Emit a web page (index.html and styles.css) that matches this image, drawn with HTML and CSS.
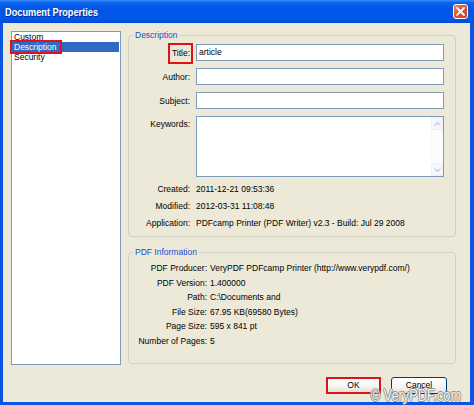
FILE: index.html
```html
<!DOCTYPE html>
<html>
<head>
<meta charset="utf-8">
<link rel="stylesheet" href="styles.css">
</head>
<body>
<div class="window">
  <div class="titlebar">
    <span class="title"><span class="title-text">Document Properties</span></span>
    <span class="close">
      <svg width="9" height="9" viewBox="0 0 9 9"><path d="M1 1L8 8M8 1L1 8" stroke="#fff" stroke-width="1.8" stroke-linecap="square"/></svg>
    </span>
  </div>
  <div class="body">
    <div class="main">
      <div class="list">
        <div class="item">Custom</div>
        <div class="item selected"><span class="mark mark-desc">Description</span></div>
        <div class="item">Security</div>
      </div>
      <div class="panels">
        <div class="group desc">
          <div class="legend">Description</div>
          <div class="field"><span class="lbl"><span class="mark mark-title">Title:</span></span><div class="input">article</div></div>
          <div class="field"><span class="lbl">Author:</span><div class="input"></div></div>
          <div class="field"><span class="lbl">Subject:</span><div class="input"></div></div>
          <div class="field top"><span class="lbl">Keywords:</span>
            <div class="input textarea">
              <div class="scroll">
                <span class="sbtn"><svg width="7" height="4" viewBox="0 0 7 4"><path d="M0.5 3.5L3.5 0.5L6.5 3.5" fill="none" stroke="#C4CBD9" stroke-width="1.2"/></svg></span>
                <span class="strack"></span>
                <span class="sbtn"><svg width="7" height="4" viewBox="0 0 7 4"><path d="M0.5 0.5L3.5 3.5L6.5 0.5" fill="none" stroke="#C4CBD9" stroke-width="1.2"/></svg></span>
              </div>
            </div>
          </div>
          <div class="kvs">
            <div class="kv"><span class="lbl">Created:</span><span class="val">2011-12-21 09:53:36</span></div>
            <div class="kv"><span class="lbl">Modified:</span><span class="val">2012-03-31 11:08:48</span></div>
            <div class="kv"><span class="lbl">Application:</span><span class="val">PDFcamp Printer (PDF Writer) v2.3 - Build: Jul 29 2008</span></div>
          </div>
        </div>
        <div class="group pdf">
          <div class="legend">PDF Information</div>
          <div class="kv"><span class="lbl">PDF Producer:</span><span class="val">VeryPDF PDFcamp Printer (http://www.verypdf.com/)</span></div>
          <div class="kv"><span class="lbl">PDF Version:</span><span class="val">1.400000</span></div>
          <div class="kv"><span class="lbl">Path:</span><span class="val">C:\Documents and</span></div>
          <div class="kv"><span class="lbl">File Size:</span><span class="val">67.95 KB(69580 Bytes)</span></div>
          <div class="kv"><span class="lbl">Page Size:</span><span class="val">595 x 841 pt</span></div>
          <div class="kv"><span class="lbl">Number of Pages:</span><span class="val">5</span></div>
        </div>
      </div>
    </div>
    <div class="buttons">
      <span class="btn ok">OK</span>
      <span class="btn">Cancel</span>
    </div>
    <div class="watermark">© VeryPDF.com</div>
  </div>
</div>
</body>
</html>
```
FILE: styles.css
```css
html, body {
  margin: 0;
  padding: 0;
}
body {
  width: 474px;
  height: 405px;
  overflow: hidden;
  font-family: "Liberation Sans", Arial, sans-serif;
  font-size: 8.5px;
  color: #000;
}
.window {
  width: 474px;
  height: 405px;
  background: #0B55E3;
  display: flex;
  flex-direction: column;
}
.titlebar {
  height: 23px;
  flex: none;
  display: flex;
  align-items: center;
  padding: 0 6px 0 5px;
  background: linear-gradient(#3A8CF8 0%, #0A61EE 12%, #0055E5 45%, #0058EC 80%, #0349D8 100%);
}
.title {
  flex: 1;
  color: #fff;
  font-weight: bold;
  font-size: 11.5px;
  font-family: "Liberation Sans", Arial, sans-serif;
  text-shadow: 1px 1px 0 #0B2A8A;
  white-space: nowrap;
}
.title-text {
  display: inline-block;
  transform: scaleX(0.8);
  transform-origin: left center;
}
.close {
  width: 15px;
  height: 15px;
  box-sizing: border-box;
  border: 1px solid #fff;
  border-radius: 3px;
  background: linear-gradient(135deg, #F08B6A 0%, #E2552F 45%, #C9401E 100%);
  display: flex;
  align-items: center;
  justify-content: center;
}
.close svg { display: block; }

.body {
  flex: 1;
  margin: 0 4px 3px 3px;
  background: #ECE9D8;
  position: relative;
  padding: 8px 14px 0 8px;
  display: flex;
  flex-direction: column;
}
.main {
  display: flex;
  gap: 7px;
}
.list {
  width: 110px;
  height: 334px;
  box-sizing: border-box;
  border: 1px solid #7F9DB9;
  background: #fff;
  padding: 0 1px 0 0;
}
.item {
  height: 10px;
  line-height: 10px;
  padding-left: 2px;
  white-space: nowrap;
}
.item.selected {
  background: #316AC5;
  color: #fff;
}
.mark {
  position: relative;
}
.mark::after {
  content: "";
  position: absolute;
  border: 2px solid #E2101A;
}
.mark-desc::after {
  left: -4px;
  right: -5px;
  top: -2px;
  bottom: -2px;
}
.mark-title::after {
  left: -4px;
  right: -3px;
  top: -5px;
  bottom: -6px;
}

.panels {
  flex: 1;
  padding-top: 4px;
  display: flex;
  flex-direction: column;
  gap: 15px;
}
.group {
  position: relative;
  border: 1px solid #D0D0BF;
  border-radius: 4px;
}
.legend {
  position: absolute;
  top: -6px;
  left: 4px;
  padding: 0 2px;
  background: #ECE9D8;
  color: #1A4ED2;
  line-height: 11px;
}
.desc {
  padding: 8px 11px 4px 0;
  display: flex;
  flex-direction: column;
  gap: 7px;
}
.field {
  display: flex;
  align-items: center;
  gap: 6px;
}
.field.top {
  align-items: flex-start;
}
.field.top .lbl {
  padding-top: 3px;
}
.lbl {
  width: 61px;
  flex: none;
  text-align: right;
  white-space: nowrap;
}
.input {
  flex: 1;
  height: 17px;
  box-sizing: border-box;
  border: 1px solid #7F9DB9;
  background: #fff;
  line-height: 15px;
  padding-left: 2px;
}
.textarea {
  height: 61px;
  display: flex;
  justify-content: flex-end;
  padding: 0;
}
.scroll {
  width: 12px;
  display: flex;
  flex-direction: column;
  background: #FBFBF9;
}
.sbtn {
  height: 13px;
  display: flex;
  align-items: center;
  justify-content: center;
  background: #F6F7FA;
  border: 1px solid #EEF0F5;
  box-sizing: border-box;
}
.sbtn svg { display: block; }
.strack {
  flex: 1;
}
.kvs {
  margin-top: -3px;
}
.kv {
  display: flex;
  gap: 6px;
  height: 17px;
  line-height: 17px;
  white-space: nowrap;
}
.pdf {
  padding: 8px 0 14px 0;
}
.pdf .kv {
  height: 14.6px;
  line-height: 14.6px;
  gap: 3px;
}
.pdf .lbl {
  width: 78px;
}

.buttons {
  margin-top: 12px;
  padding-right: 9px;
  display: flex;
  justify-content: flex-end;
  gap: 10px;
}
.btn {
  width: 56px;
  height: 17px;
  box-sizing: border-box;
  border: 1px solid #003C74;
  border-radius: 3px;
  background: linear-gradient(#FFFFFF 0%, #F4F4F0 60%, #E3E2DA 100%);
  text-align: center;
  line-height: 15px;
}
.btn.ok {
  width: 55px;
  border: 2px solid #E2101A;
  border-radius: 0;
  line-height: 13px;
}
.watermark {
  position: absolute;
  right: 9px;
  bottom: -3px;
  font-family: "Liberation Sans", Arial, sans-serif;
  font-size: 16px;
  color: #F3F3F0;
  text-shadow: 1px 0 0 #8C8C8C, -1px 0 0 #8C8C8C, 0 1px 0 #8C8C8C, 0 -1px 0 #8C8C8C;
  white-space: nowrap;
  transform: scaleX(0.8);
  transform-origin: right bottom;
}
```
